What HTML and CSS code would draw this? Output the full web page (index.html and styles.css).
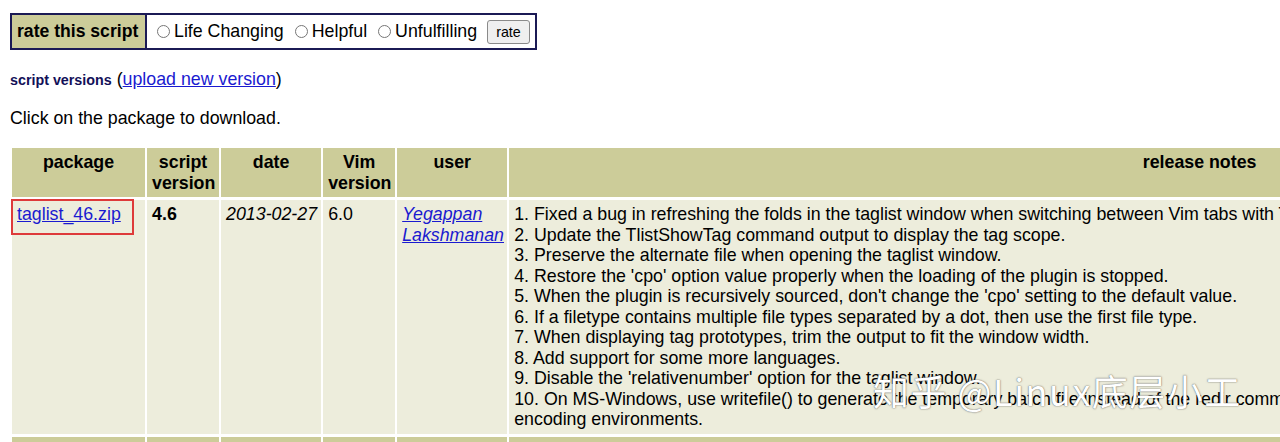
FILE: index.html
```html
<!DOCTYPE html>
<html>
<head>
<meta charset="utf-8">
<link rel="stylesheet" href="styles.css">
</head>
<body>
<div class="page">
  <form class="rate-box">
    <div class="rate-label">rate this script</div>
    <div class="rate-options">
      <label class="opt"><input type="radio" name="rating">Life Changing</label>
      <label class="opt"><input type="radio" name="rating">Helpful</label>
      <label class="opt"><input type="radio" name="rating">Unfulfilling</label>
      <button type="button" class="rate-btn">rate</button>
    </div>
  </form>

  <p class="versions-line"><span class="txth">script versions</span> (<a href="#">upload new version</a>)</p>

  <p class="click-line">Click on the package to download.</p>

  <table class="versions">
    <tr class="head">
      <th class="c-pkg">package</th>
      <th class="c-sv">script<br>version</th>
      <th class="c-date">date</th>
      <th class="c-vim">Vim<br>version</th>
      <th class="c-user">user</th>
      <th class="c-notes">release notes</th>
    </tr>
    <tr class="row-light">
      <td class="pkg-cell"><a href="#">taglist_46.zip</a><span class="mark"></span></td>
      <td><b>4.6</b></td>
      <td class="nw"><i>2013-02-27</i></td>
      <td>6.0</td>
      <td><i><a href="#">Yegappan Lakshmanan</a></i></td>
      <td class="notes">1. Fixed a bug in refreshing the folds in the taglist window when switching between Vim tabs with Tlist window open.<br>2. Update the TlistShowTag command output to display the tag scope.<br>3. Preserve the alternate file when opening the taglist window.<br>4. Restore the 'cpo' option value properly when the loading of the plugin is stopped.<br>5. When the plugin is recursively sourced, don't change the 'cpo' setting to the default value.<br>6. If a filetype contains multiple file types separated by a dot, then use the first file type.<br>7. When displaying tag prototypes, trim the output to fit the window width.<br>8. Add support for some more languages.<br>9. Disable the 'relativenumber' option for the taglist window.<br>10. On MS-Windows, use writefile() to generate the temporary batch file instead of the redir command to fix a problem in multibyte<br>encoding environments.</td>
    </tr>
    <tr class="row-dark">
      <td><a href="#">taglist_45.zip</a></td>
      <td><b>4.5</b></td>
      <td class="nw"><i>2007-09-21</i></td>
      <td>6.0</td>
      <td><i><a href="#">Yegappan Lakshmanan</a></i></td>
      <td class="notes">Fix an extra space in the tag prototype.</td>
    </tr>
  </table>

  <div class="watermark">知乎 @Linux底层小工</div>
</div>
</body>
</html>
```
FILE: styles.css
```css
html, body {
  margin: 0;
  padding: 0;
  background: #ffffff;
  overflow: hidden;
}
body {
  font-family: "Liberation Sans", Arial, sans-serif;
  font-size: 17.8px;
  color: #000;
}
.page {
  padding: 13px 0 0 10px;
}
a {
  color: #1a1ad0;
}

/* rate box */
.rate-box {
  display: inline-flex;
  border: 2px solid #1b1a55;
  margin: 0;
}
.rate-label {
  background: #cccc99;
  font-weight: bold;
  font-size: 17.6px;
  padding: 6px 6px 6px 5px;
  border-right: 2px solid #1b1a55;
  line-height: 21px;
  width: 122px;
}
.rate-options {
  display: flex;
  align-items: center;
  padding: 0 5px 0 9px;
}
.opt {
  display: inline-flex;
  align-items: center;
  margin-right: 10px;
}
.opt input {
  width: 13px;
  height: 13px;
  margin: 0 4px 0 1px;
}
.rate-btn {
  font-family: "Liberation Sans", Arial, sans-serif;
  font-size: 14.3px;
  padding: 2px 8px;
  background: #efefef;
  border: 1px solid #8a8a8a;
  border-radius: 3px;
  height: 24px;
  margin-left: 0;
}

/* lines */
.versions-line {
  margin: 19px 0 0 0;
  line-height: 21px;
}
.txth {
  font-size: 14.3px;
  font-weight: bold;
  color: #121058;
}
.click-line {
  margin: 17px 0 0 0;
  line-height: 21px;
}

/* table */
.versions {
  border-spacing: 2px 3px;
  margin-top: 16px;
  margin-left: 0;
  table-layout: fixed;
  width: 1882px;
}
.versions th, .versions td {
  padding: 4px 5px;
  line-height: 20.5px;
  vertical-align: top;
  text-align: left;
}
.versions th {
  background: #cccc99;
  text-align: center;
  font-weight: bold;
}
.c-pkg { width: 123px; }
.c-sv { width: 62px; }
.c-date { width: 90px; }
.c-vim { width: 62px; }
.c-user { width: 100px; }
.c-notes { width: 1370px; }
.nw {
  white-space: nowrap;
  overflow: visible;
}
.row-light td {
  background: #ededdc;
}
.row-dark td {
  background: #cccc99;
}
.notes {
  white-space: nowrap;
}
.pkg-cell {
  position: relative;
}
.mark {
  position: absolute;
  left: -1px;
  top: -1px;
  width: 119px;
  height: 32px;
  border: 2px solid #de3a3a;
}

/* watermark overlay */
.watermark {
  position: absolute;
  left: 873px;
  top: 364px;
  font-family: "Noto Sans CJK SC", "Noto Sans", sans-serif;
  font-size: 36px;
  letter-spacing: 1.5px;
  color: #ffffff;
  text-shadow: 0 0 1px rgba(60, 60, 60, 0.8), 0 0 2px rgba(80, 80, 80, 0.5);
  white-space: nowrap;
}
```
